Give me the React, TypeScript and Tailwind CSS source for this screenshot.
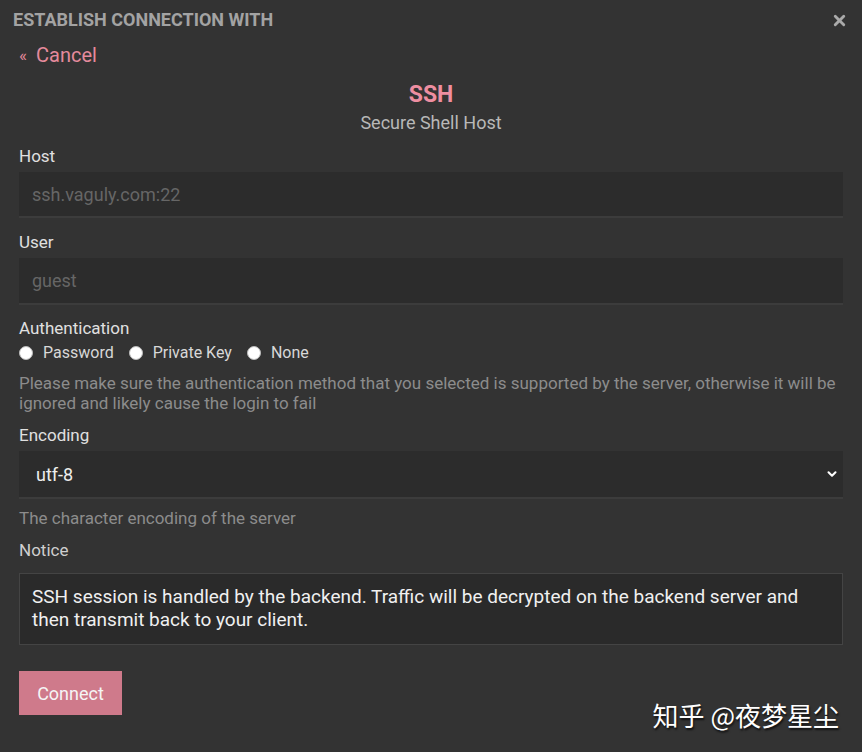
import { ChevronDown, X } from "lucide-react";

const FONT = "font-['Roboto','Liberation_Sans',sans-serif]";

function Radio({ label }: { label: string }) {
  return (
    <label className="flex items-center gap-[10px]">
      <span className="h-[14px] w-[14px] rounded-full border border-[#bbb] bg-white" />
      <span>{label}</span>
    </label>
  );
}

export default function App() {
  return (
    <div className={`${FONT} relative h-[752px] w-full overflow-hidden bg-[#333333] text-[17px] text-[#dcdcdc]`}>
      {/* 헤더 */}
      <div className="flex items-center justify-between pl-[13px] pr-[14px] pt-[8px]">
        <span className="text-[18px] font-bold leading-[24px] text-[#a3a3a3]">ESTABLISH CONNECTION WITH</span>
        <X size={17} strokeWidth={4} className="text-[#aaaaaa]" />
      </div>

      <div className="px-[19px]">
        <div className="mt-[8px] flex items-center gap-[9px] text-[20px] leading-[30px] text-[#e58a9c]">
          <span className="text-[17px]">«</span>
          <span>Cancel</span>
        </div>

        <div className="mt-[11px] flex flex-col items-center">
          <span className="text-[23px] font-bold leading-[28px] text-[#ee8ea1]">SSH</span>
          <span className="text-[18px] leading-[28px] text-[#b8b8b8]">Secure Shell Host</span>
        </div>

        {/* Host */}
        <div className="mt-[7px] leading-[24px] text-[#e0e0e0]">Host</div>
        <div className="mt-[4px] flex h-[46px] items-center border-b-2 border-[#3c3c3c] bg-[#2c2c2c] text-[18px] text-[#666666]">
          <span className="ml-[13px]">ssh.vaguly.com:22</span>
        </div>

        {/* User */}
        <div className="mt-[12px] leading-[24px] text-[#e0e0e0]">User</div>
        <div className="mt-[4px] flex h-[47px] items-center border-b-2 border-[#3c3c3c] bg-[#2c2c2c] text-[18px] text-[#666666]">
          <span className="ml-[13px]">guest</span>
        </div>

        {/* Authentication */}
        <div className="mt-[11px] leading-[24px] text-[#e0e0e0]">Authentication</div>
        <div className="mt-[1px] flex items-center gap-[15px] text-[16px] leading-[24px] text-[#d8d8d8]">
          <Radio label="Password" />
          <Radio label="Private Key" />
          <Radio label="None" />
        </div>
        <p className="mt-[8px] leading-[20px] text-[#8c8c8c]">
          Please make sure the authentication method that you selected is supported by the server, otherwise it will be
          ignored and likely cause the login to fail
        </p>

        {/* Encoding */}
        <div className="mt-[10px] leading-[24px] text-[#e0e0e0]">Encoding</div>
        <div className="mt-[4px] flex h-[48px] items-center justify-between border-b-2 border-[#3c3c3c] bg-[#2c2c2c] text-[18px] text-[#eeeeee]">
          <span className="ml-[17px]">utf-8</span>
          <ChevronDown size={14} strokeWidth={3.5} className="mr-[4px] text-white" />
        </div>
        <div className="mt-[7px] leading-[24px] text-[#8c8c8c]">The character encoding of the server</div>

        {/* Notice */}
        <div className="mt-[8px] leading-[24px] text-[#cfcfcf]">Notice</div>
        <div className="mt-[11px] border border-[#444444] bg-[#2a2a2a] px-[12px] pb-[13px] pt-[11px] text-[19px] leading-[23px] text-[#f0f0f0]">
          SSH session is handled by the backend. Traffic will be decrypted on the backend server and then transmit back to
          your client.
        </div>

        <button className="mt-[26px] h-[44px] w-[103px] bg-[#cf7a8b] text-[18px] text-[#f5f5f5]">Connect</button>
      </div>

      {/* 워터마크 */}
      <span className="absolute bottom-[19px] right-[23px] font-['Noto_Sans_CJK_SC',sans-serif] text-[26px] leading-[36px] text-white [text-shadow:1px_2px_2px_rgba(0,0,0,0.7)]">
        知乎 @夜梦星尘
      </span>
    </div>
  );
}
